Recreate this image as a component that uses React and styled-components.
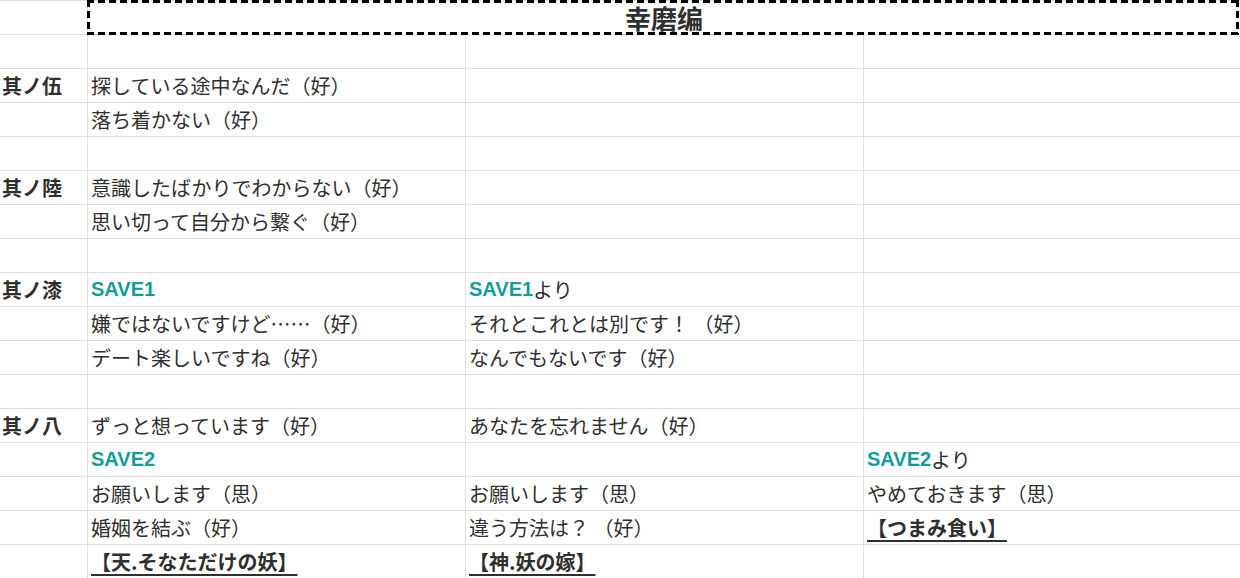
import styled, { createGlobalStyle } from "styled-components";

const GlobalStyle = createGlobalStyle`
  html, body {
    margin: 0;
    padding: 0;
    background: #fff;
    overflow: hidden;
  }
  body {
    font-family: "Noto Sans CJK JP", "Noto Sans", sans-serif;
    color: #2f2f2f;
  }
`;

const Sheet = styled.div`
  display: grid;
  grid-template-columns: 88px 378px 398px 1fr;
  grid-auto-rows: 34px;
  width: 1240px;
  border-top: 1px solid #e0e0e0;
`;

const Cell = styled.div`
  display: flex;
  align-items: center;
  padding: 0 0 0 ${({ $label }) => ($label ? "2px" : "3px")};
  box-sizing: border-box;
  border-bottom: 1px solid #e0e0e0;
  border-right: ${({ $last }) => ($last ? "none" : "1px solid #e0e0e0")};
  font-size: 20px;
  font-weight: ${({ $label }) => ($label ? 700 : 400)};
  white-space: nowrap;
  overflow: hidden;
`;

const TitleCell = styled.div`
  grid-column: 2 / span 3;
  position: relative;
  display: flex;
  align-items: center;
  justify-content: center;
  border-bottom: 1px solid #e0e0e0;
  font-size: 26px;
  font-weight: 700;

  /* copy marquee round the merged cell */
  &::after {
    content: "";
    position: absolute;
    left: -1px;
    right: 1px;
    top: -1px;
    bottom: -1px;
    background:
      repeating-linear-gradient(90deg, #000 0 7px, transparent 7px 11px) top / 100% 3px no-repeat,
      repeating-linear-gradient(90deg, #000 0 7px, transparent 7px 11px) bottom / 100% 3px no-repeat,
      repeating-linear-gradient(180deg, #000 0 7px, transparent 7px 11px) left / 3px 100% no-repeat,
      repeating-linear-gradient(180deg, #000 0 7px, transparent 7px 11px) right / 3px 100% no-repeat;
    pointer-events: none;
  }
`;

const Save = styled.span`
  font-family: "Liberation Sans", Arial, sans-serif;
  font-weight: 700;
  font-size: 20px;
  color: #149c9b;
`;

const Ending = styled.span`
  font-weight: 700;
  text-decoration: underline;
  text-decoration-thickness: 2px;
  text-underline-offset: 4px;
`;

const rows = [
  ["", "", "", ""],
  ["其ノ伍", "探している途中なんだ（好）", "", ""],
  ["", "落ち着かない（好）", "", ""],
  ["", "", "", ""],
  ["其ノ陸", "意識したばかりでわからない（好）", "", ""],
  ["", "思い切って自分から繋ぐ（好）", "", ""],
  ["", "", "", ""],
  ["其ノ漆", <Save>SAVE1</Save>, <><Save>SAVE1</Save>より</>, ""],
  ["", "嫌ではないですけど……（好）", "それとこれとは別です！ （好）", ""],
  ["", "デート楽しいですね（好）", "なんでもないです（好）", ""],
  ["", "", "", ""],
  ["其ノ八", "ずっと想っています（好）", "あなたを忘れません（好）", ""],
  ["", <Save>SAVE2</Save>, "", <><Save>SAVE2</Save>より</>],
  ["", "お願いします（思）", "お願いします（思）", "やめておきます（思）"],
  ["", "婚姻を結ぶ（好）", "違う方法は？ （好）", <Ending>【つまみ食い】</Ending>],
  ["", <Ending>【天.そなただけの妖】</Ending>, <Ending>【神.妖の嫁】</Ending>, ""],
];

const App = () => (
  <>
    <GlobalStyle />
    <Sheet>
      <Cell $label />
      <TitleCell>幸磨编</TitleCell>
      {rows.map((row, r) =>
        row.map((value, c) => (
          <Cell key={`${r}-${c}`} $label={c === 0} $last={c === 3}>
            {value}
          </Cell>
        ))
      )}
    </Sheet>
  </>
);

export default App;
